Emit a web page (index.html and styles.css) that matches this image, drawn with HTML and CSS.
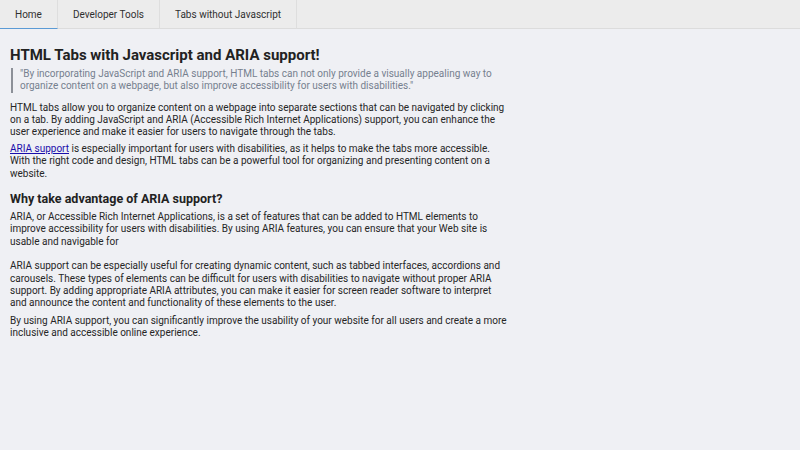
FILE: index.html
```html
<!DOCTYPE html>
<html lang="en">
<head>
<meta charset="utf-8">
<title>HTML Tabs</title>
<link rel="stylesheet" href="styles.css">
</head>
<body>
<nav class="tabs" role="tablist">
  <button class="tab active" role="tab" aria-selected="true">Home</button>
  <button class="tab" role="tab" aria-selected="false">Developer Tools</button>
  <button class="tab" role="tab" aria-selected="false">Tabs without Javascript</button>
</nav>
<main class="panel" role="tabpanel">
  <h1 class="title">HTML Tabs with Javascript and ARIA support!</h1>
  <blockquote class="quote">"By incorporating JavaScript and ARIA support, HTML tabs can not only provide a visually appealing way to organize content on a webpage, but also improve accessibility for users with disabilities."</blockquote>
  <p class="text">HTML tabs allow you to organize content on a webpage into separate sections that can be navigated by clicking on a tab. By adding JavaScript and ARIA (Accessible Rich Internet Applications) support, you can enhance the user experience and make it easier for users to navigate through the tabs.</p>
  <p class="text"><a class="link" href="#">ARIA support</a> is especially important for users with disabilities, as it helps to make the tabs more accessible. With the right code and design, HTML tabs can be a powerful tool for organizing and presenting content on a website.</p>
  <h2 class="subtitle">Why take advantage of ARIA support?</h2>
  <p class="text">ARIA, or Accessible Rich Internet Applications, is a set of features that can be added to HTML elements to improve accessibility for users with disabilities. By using ARIA features, you can ensure that your Web site is usable and navigable for</p>
  <p class="text spaced">ARIA support can be especially useful for creating dynamic content, such as tabbed interfaces, accordions and carousels. These types of elements can be difficult for users with disabilities to navigate without proper ARIA support. By adding appropriate ARIA attributes, you can make it easier for screen reader software to interpret and announce the content and functionality of these elements to the user.</p>
  <p class="text last">By using ARIA support, you can significantly improve the usability of your website for all users and create a more inclusive and accessible online experience.</p>
</main>
</body>
</html>
```
FILE: styles.css
```css
html, body {
  margin: 0;
  padding: 0;
  background: #eff0f4;
  font-family: Roboto, "Liberation Sans", sans-serif;
  color: #262626;
}

.tabs {
  display: flex;
  height: 28px;
  background: #ececec;
  border-bottom: 1px solid #dcdcdc;
}

.tab {
  font-family: inherit;
  font-size: 10px;
  color: #303030;
  background: transparent;
  border: none;
  border-right: 1px solid #dedede;
  border-bottom: 1px solid transparent;
  padding: 0 15px;
  margin: 0 0 -1px 0;
  cursor: pointer;
}

.tab.active {
  border-bottom: 1px solid #5b9bd5;
}

.panel {
  padding: 4px 10px 10px 10px;
  max-width: 500px;
}

.title {
  font-size: 15px;
  font-weight: 700;
  margin: 13px 0 4px 0;
  color: #222;
}

.quote {
  margin: 0 0 9px 1px;
  padding: 0 0 0 7px;
  border-left: 2px solid #8c9098;
  color: #76808f;
  font-size: 10px;
  line-height: 12.3px;
}

.text {
  font-size: 10px;
  line-height: 12.4px;
  margin: 0 0 4px 0;
}

.text.spaced {
  margin-top: 12px;
}

.text.last {
  margin-top: 5px;
}

.subtitle {
  font-size: 12.5px;
  font-weight: 700;
  margin: 11px 0 5px 0;
  color: #222;
}

.link {
  color: #1a0dab;
}
```
